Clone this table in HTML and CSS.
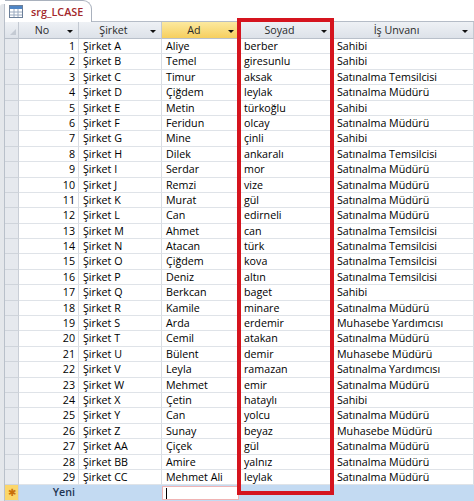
FILE: index.html
```html
<!DOCTYPE html>
<html lang="tr">
<head>
<meta charset="utf-8">
<title>srg_LCASE</title>
<link rel="stylesheet" href="styles.css">
</head>
<body>
<div class="app">
  <div class="navstrip"></div>
  <div class="main">
    <div class="tabbar">
      <div class="tab">
        <svg class="tab-icon" width="14" height="13" viewBox="0 0 14 13">
          <rect x="0.5" y="0.5" width="13" height="12" fill="#fff" stroke="#6b7f99"/>
          <rect x="1" y="1" width="12" height="3" fill="#4f86c6"/>
          <line x1="1" y1="7" x2="13" y2="7" stroke="#9aaac0"/>
          <line x1="1" y1="10" x2="13" y2="10" stroke="#9aaac0"/>
          <line x1="5" y1="4" x2="5" y2="12" stroke="#9aaac0"/>
          <line x1="9" y1="4" x2="9" y2="12" stroke="#9aaac0"/>
        </svg>
        <span class="tab-label">srg_LCASE</span>
      </div>
    </div>
    <div class="sheet">
      <div class="hd sel"><span class="corner"></span></div>
      <div class="hd"><span class="hd-t">No</span><span class="arrow"></span></div>
      <div class="hd"><span class="hd-t">Şirket</span><span class="arrow"></span></div>
      <div class="hd active"><span class="hd-t">Ad</span><span class="arrow"></span></div>
      <div class="hd"><span class="hd-t">Soyad</span><span class="arrow"></span></div>
      <div class="hd"><span class="hd-t">İş Unvanı</span><span class="arrow"></span></div>

      <div class="c sel"></div><div class="c num">1</div><div class="c">Şirket A</div><div class="c">Aliye</div><div class="c">berber</div><div class="c">Sahibi</div>
      <div class="c sel"></div><div class="c num">2</div><div class="c">Şirket B</div><div class="c">Temel</div><div class="c">giresunlu</div><div class="c">Sahibi</div>
      <div class="c sel"></div><div class="c num">3</div><div class="c">Şirket C</div><div class="c">Timur</div><div class="c">aksak</div><div class="c">Satınalma Temsilcisi</div>
      <div class="c sel"></div><div class="c num">4</div><div class="c">Şirket D</div><div class="c">Çiğdem</div><div class="c">leylak</div><div class="c">Satınalma Müdürü</div>
      <div class="c sel"></div><div class="c num">5</div><div class="c">Şirket E</div><div class="c">Metin</div><div class="c">türkoğlu</div><div class="c">Sahibi</div>
      <div class="c sel"></div><div class="c num">6</div><div class="c">Şirket F</div><div class="c">Feridun</div><div class="c">olcay</div><div class="c">Satınalma Müdürü</div>
      <div class="c sel"></div><div class="c num">7</div><div class="c">Şirket G</div><div class="c">Mine</div><div class="c">çinli</div><div class="c">Sahibi</div>
      <div class="c sel"></div><div class="c num">8</div><div class="c">Şirket H</div><div class="c">Dilek</div><div class="c">ankaralı</div><div class="c">Satınalma Temsilcisi</div>
      <div class="c sel"></div><div class="c num">9</div><div class="c">Şirket I</div><div class="c">Serdar</div><div class="c">mor</div><div class="c">Satınalma Müdürü</div>
      <div class="c sel"></div><div class="c num">10</div><div class="c">Şirket J</div><div class="c">Remzi</div><div class="c">vize</div><div class="c">Satınalma Müdürü</div>
      <div class="c sel"></div><div class="c num">11</div><div class="c">Şirket K</div><div class="c">Murat</div><div class="c">gül</div><div class="c">Satınalma Müdürü</div>
      <div class="c sel"></div><div class="c num">12</div><div class="c">Şirket L</div><div class="c">Can</div><div class="c">edirneli</div><div class="c">Satınalma Müdürü</div>
      <div class="c sel"></div><div class="c num">13</div><div class="c">Şirket M</div><div class="c">Ahmet</div><div class="c">can</div><div class="c">Satınalma Temsilcisi</div>
      <div class="c sel"></div><div class="c num">14</div><div class="c">Şirket N</div><div class="c">Atacan</div><div class="c">türk</div><div class="c">Satınalma Temsilcisi</div>
      <div class="c sel"></div><div class="c num">15</div><div class="c">Şirket O</div><div class="c">Çiğdem</div><div class="c">kova</div><div class="c">Satınalma Temsilcisi</div>
      <div class="c sel"></div><div class="c num">16</div><div class="c">Şirket P</div><div class="c">Deniz</div><div class="c">altın</div><div class="c">Satınalma Temsilcisi</div>
      <div class="c sel"></div><div class="c num">17</div><div class="c">Şirket Q</div><div class="c">Berkcan</div><div class="c">baget</div><div class="c">Sahibi</div>
      <div class="c sel"></div><div class="c num">18</div><div class="c">Şirket R</div><div class="c">Kamile</div><div class="c">minare</div><div class="c">Satınalma Müdürü</div>
      <div class="c sel"></div><div class="c num">19</div><div class="c">Şirket S</div><div class="c">Arda</div><div class="c">erdemir</div><div class="c">Muhasebe Yardımcısı</div>
      <div class="c sel"></div><div class="c num">20</div><div class="c">Şirket T</div><div class="c">Cemil</div><div class="c">atakan</div><div class="c">Satınalma Müdürü</div>
      <div class="c sel"></div><div class="c num">21</div><div class="c">Şirket U</div><div class="c">Bülent</div><div class="c">demir</div><div class="c">Muhasebe Müdürü</div>
      <div class="c sel"></div><div class="c num">22</div><div class="c">Şirket V</div><div class="c">Leyla</div><div class="c">ramazan</div><div class="c">Satınalma Yardımcısı</div>
      <div class="c sel"></div><div class="c num">23</div><div class="c">Şirket W</div><div class="c">Mehmet</div><div class="c">emir</div><div class="c">Satınalma Müdürü</div>
      <div class="c sel"></div><div class="c num">24</div><div class="c">Şirket X</div><div class="c">Çetin</div><div class="c">hataylı</div><div class="c">Sahibi</div>
      <div class="c sel"></div><div class="c num">25</div><div class="c">Şirket Y</div><div class="c">Can</div><div class="c">yolcu</div><div class="c">Satınalma Müdürü</div>
      <div class="c sel"></div><div class="c num">26</div><div class="c">Şirket Z</div><div class="c">Sunay</div><div class="c">beyaz</div><div class="c">Muhasebe Müdürü</div>
      <div class="c sel"></div><div class="c num">27</div><div class="c">Şirket AA</div><div class="c">Çiçek</div><div class="c">gül</div><div class="c">Satınalma Müdürü</div>
      <div class="c sel"></div><div class="c num">28</div><div class="c">Şirket BB</div><div class="c">Amire</div><div class="c">yalnız</div><div class="c">Satınalma Müdürü</div>
      <div class="c sel"></div><div class="c num">29</div><div class="c">Şirket CC</div><div class="c">Mehmet Ali</div><div class="c">leylak</div><div class="c">Satınalma Müdürü</div>

      <div class="c sel new-sel">✱</div><div class="c num new">Yeni</div><div class="c new"></div><div class="c new"><span class="edit"><span class="caret"></span></span></div><div class="c new"></div><div class="c new"></div>
    </div>
  </div>
  <div class="highlight"></div>
</div>
</body>
</html>
```
FILE: styles.css
```css
* { box-sizing: border-box; }
html, body { margin: 0; padding: 0; background: #fff; }
body {
  font-family: "Open Sans", "Noto Sans", sans-serif;
  font-size: 10.7px;
  color: #000;
}
.app {
  position: relative;
  width: 474px;
  height: 501px;
  overflow: hidden;
  display: flex;
  background: #fff;
}
.navstrip {
  width: 5px;
  flex: none;
  margin-top: 4px;
  background: #e4e7eb;
  border-right: 1px solid #b9c0ca;
  border-radius: 3px 0 0 0;
}
.main {
  flex: 1;
  display: flex;
  flex-direction: column;
}
.tabbar {
  height: 22px;
  border-bottom: 1px solid #b5bcc7;
  display: flex;
  align-items: flex-end;
}
.tab {
  height: 22px;
  width: 87px;
  margin-bottom: -1px;
  background: #fff;
  border: 1px solid #a9b1bd;
  border-bottom: none;
  border-left: none;
  border-radius: 0 9px 0 0;
  display: flex;
  align-items: center;
  gap: 8px;
  padding-left: 4px;
}
.tab-icon { flex: none; }
.tab-label {
  color: #a3272c;
  font-weight: 600;
  font-size: 10.8px;
}
.sheet {
  display: grid;
  grid-template-columns: 14px 60px 83px 78px 93px 1fr;
  grid-template-rows: 17px;
  grid-auto-rows: 15.4px;
}
.hd {
  background: linear-gradient(#eef1f5, #dde2e9);
  border-right: 1px solid #c3c9d2;
  border-bottom: 1px solid #b9c0ca;
  display: flex;
  align-items: center;
  color: #2b2b2b;
  position: relative;
}
.hd-t { flex: 1; text-align: center; padding-right: 2px; }
.hd .arrow {
  width: 0; height: 0;
  border-left: 3px solid transparent;
  border-right: 3px solid transparent;
  border-top: 3px solid #111;
  margin-right: 5px;
  margin-top: 2px;
}
.hd.active { background: linear-gradient(#fce99f, #f6cf5e); }
.corner {
  position: absolute;
  right: 2px; bottom: 3px;
  width: 0; height: 0;
  border-left: 6px solid transparent;
  border-bottom: 6px solid #c4cad3;
}
.c {
  border-right: 1px solid #d9dde3;
  border-bottom: 1px solid #dfe3e8;
  padding: 0 3px 0 4px;
  line-height: 14px;
  white-space: nowrap;
  overflow: hidden;
}
.c.num { text-align: right; padding-right: 3px; }
.c.sel {
  background: #e6e9ee;
  border-right: 1px solid #c9ced6;
  border-bottom: 1px solid #cfd4db;
}
.c.new { background: #c3daf2; border-bottom: none; border-right-color: #c3daf2; }
.c.num.new { color: #1f3552; font-weight: 600; }
.c.sel.new-sel {
  background: #fbd66a;
  color: #c86f0a;
  font-size: 10px;
  text-align: center;
  padding: 0;
}
.edit {
  display: block;
  margin: 1px -3px 0 -4px;
  height: 14px;
  background: #fff;
  border: 1px solid #f0b4b4;
  position: relative;
}
.caret {
  position: absolute;
  left: 3px; top: 1px;
  width: 1px; height: 11px;
  background: #000;
}
.highlight {
  position: absolute;
  left: 237px;
  top: 18px;
  width: 97px;
  height: 477px;
  border: 4px solid #d5141e;
}
```
